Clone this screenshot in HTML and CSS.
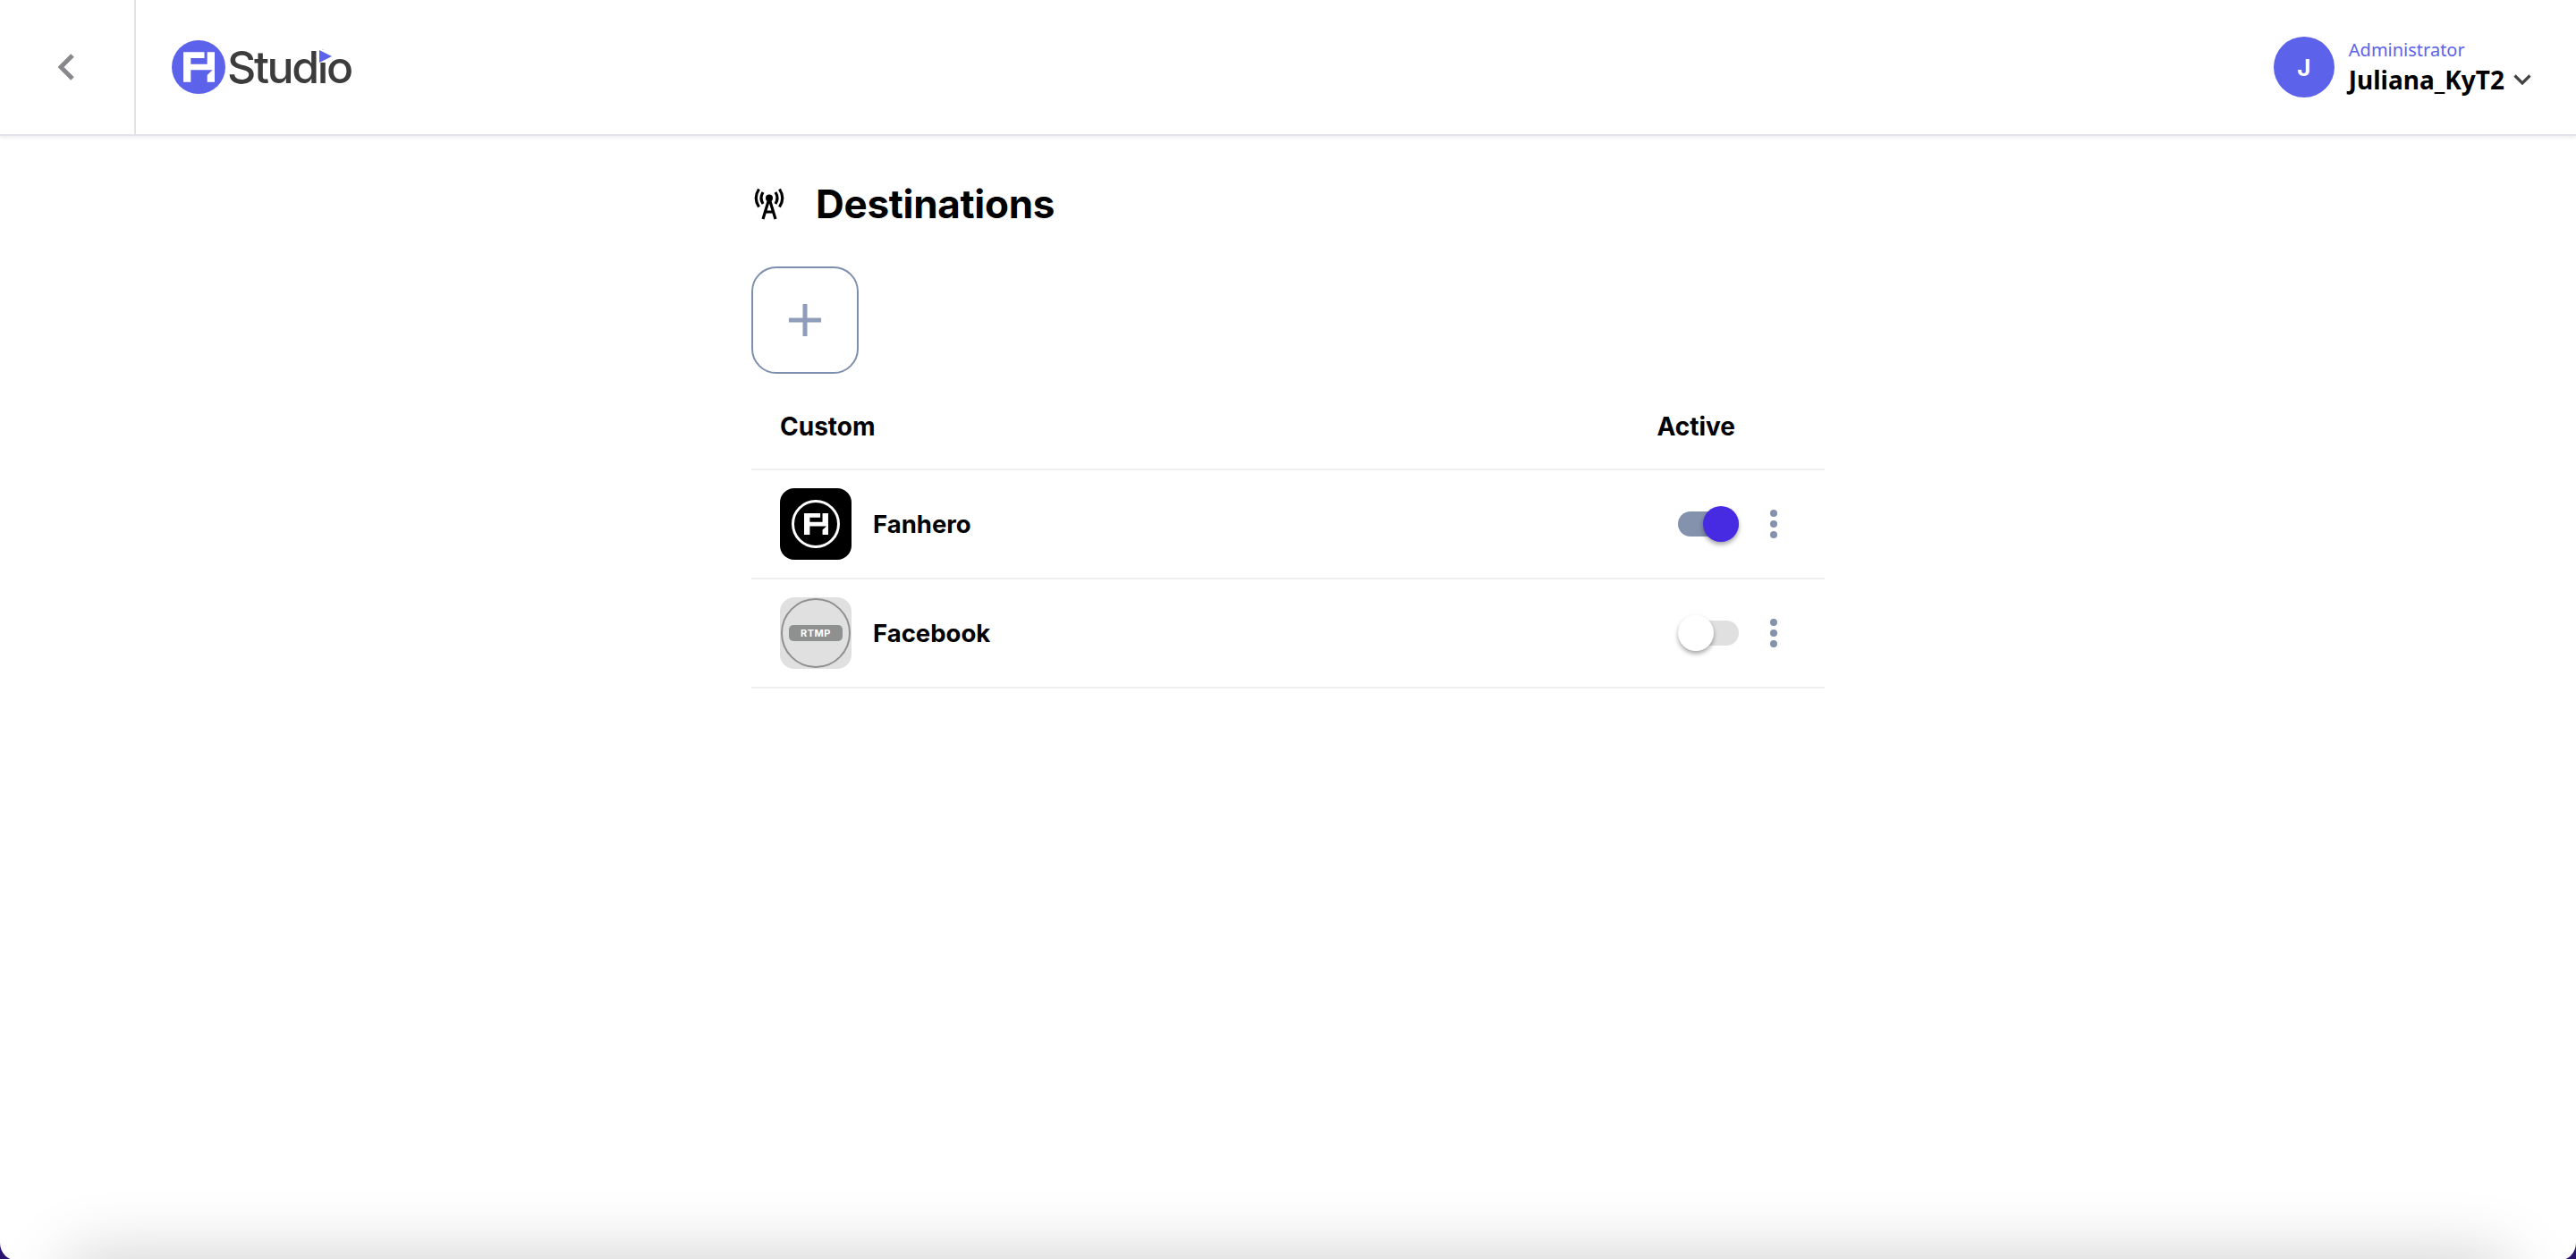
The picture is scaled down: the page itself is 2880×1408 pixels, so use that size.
FILE: index.html
```html
<!DOCTYPE html>
<html lang="en">
<head>
  <meta charset="UTF-8" />
  <title>Destinations</title>
  <link rel="stylesheet" href="styles.css">
</head>
<body>
  <div class="page">
    <header class="topbar">
      <a class="back-cell" href="#" aria-label="Back">
        <svg class="back-icon" viewBox="0 0 18 30" width="18" height="30"><path d="M16 2 L3 15 L16 28" fill="none" stroke="#87878c" stroke-width="5"/></svg>
      </a>
      <div class="brand">
        <svg class="brand-mark" viewBox="0 0 60 60" width="60" height="60">
          <circle cx="30" cy="30" r="30" fill="#5c62ea"/>
          <path d="M13 13.3 H36.5 V20 H21.3 V26.7 H39.7 V13.3 H48 V46.7 H39.7 V39 L45.5 33.3 H21.3 V46.7 H13 Z" fill="#fff"/>
        </svg>
        <span class="brand-name">Studio<svg class="brand-play" viewBox="0 0 14 14" width="14" height="14"><path d="M0 0 L14 7 L0 14 Z" fill="#5c62ea"/></svg></span>
      </div>
      <div class="user">
        <div class="avatar">J</div>
        <div class="user-info">
          <span class="user-role">Administrator</span>
          <span class="user-name">Juliana_KyT2
            <svg class="user-caret" viewBox="0 0 20 12" width="20" height="12"><path d="M1.5 1.5 L10 10 L18.5 1.5" fill="none" stroke="#444" stroke-width="3.2"/></svg>
          </span>
        </div>
      </div>
    </header>

    <main class="content">
      <div class="title-row">
        <svg class="title-icon" viewBox="0 0 36 36" width="36" height="36" fill="none" stroke="#000" stroke-width="3.2">
          <circle cx="18" cy="11.5" r="4" fill="#000" stroke="none"/>
          <path d="M18 12 L11 35 M18 12 L25 35 M13.5 27 H22.5"/>
          <path d="M11 5 Q7 11.5 11 18 M25 5 Q29 11.5 25 18"/>
          <path d="M6.5 1.5 Q0 11.5 6.5 21.5 M29.5 1.5 Q36 11.5 29.5 21.5"/>
        </svg>
        <h1>Destinations</h1>
      </div>

      <button class="add-btn" aria-label="Add destination">
        <svg viewBox="0 0 36 36" width="36" height="36"><path d="M18 0 V36 M0 18 H36" stroke="#8f9dba" stroke-width="5"/></svg>
      </button>

      <div class="table-head">
        <span>Custom</span>
        <span>Active</span>
      </div>

      <div class="dest-row">
        <svg class="dest-icon" viewBox="0 0 80 80" width="80" height="80">
          <rect width="80" height="80" rx="16" fill="#000"/>
          <circle cx="40" cy="40" r="25.5" fill="none" stroke="#fff" stroke-width="3"/>
          <path transform="translate(27 28) scale(.77 .72) translate(-13 -13.3)" d="M13 13.3 H36.5 V20 H21.3 V26.7 H39.7 V13.3 H48 V46.7 H39.7 V39 L45.5 33.3 H21.3 V46.7 H13 Z" fill="#fff"/>
        </svg>
        <span class="dest-name">Fanhero</span>
        <div class="toggle on"><span class="knob"></span></div>
        <button class="menu-btn" aria-label="Options"><i></i><i></i><i></i></button>
      </div>

      <div class="dest-row">
        <div class="rtmp-icon"><span class="rtmp-pill">RTMP</span></div>
        <span class="dest-name">Facebook</span>
        <div class="toggle"><span class="knob"></span></div>
        <button class="menu-btn" aria-label="Options"><i></i><i></i><i></i></button>
      </div>
    </main>

    <div class="bottom-shade"></div>
  </div>
</body>
</html>
```

FILE: styles.css
```css
:root {
  --brand: #5c62ea;
  --slate: #8492ad;
  --line: #f0f0f0;
}
html, body {
  margin: 0;
  height: 100%;
  overflow: hidden;
  background-color: #2a1470;
}
body {
  font-family: Inter, 'Noto Sans', sans-serif;
  color: #000;
}
.page {
  position: relative;
  height: 1410px;
  background-color: #fff;
  border-radius: 0 0 20px 20px;
  overflow: hidden;
}

/* top bar */
.topbar {
  display: flex;
  align-items: center;
  height: 150px;
  padding-right: 50px;
  border-bottom: 2px solid #e3e4e9;
  box-shadow: 0 2px 4px rgba(70,75,110,0.1);
}
.back-cell {
  display: flex;
  align-items: center;
  flex: none;
  width: 152px;
  height: 100%;
  padding-left: 65px;
  box-sizing: border-box;
  border-right: 2px solid #e3e3e6;
}
.brand {
  display: flex;
  align-items: center;
  flex: 1;
  margin-left: 40px;
}
.brand-name {
  position: relative;
  margin-left: 2px;
  font-size: 50px;
  font-weight: 500;
  letter-spacing: -2.4px;
  color: #3c3c3c;
  line-height: 60px;
}
.brand-play {
  position: absolute;
  right: 22px;
  top: 11px;
  background-color: #fff;
}
.user {
  display: flex;
  align-items: center;
  gap: 16px;
}
.avatar {
  display: flex;
  align-items: center;
  justify-content: center;
  width: 68px;
  height: 68px;
  border-radius: 50%;
  background-color: var(--brand);
  color: #fff;
  font-size: 26px;
  font-weight: 700;
}
.user-info {
  display: flex;
  flex-direction: column;
  font-family: 'Noto Sans', sans-serif;
}
.user-role {
  font-size: 20px;
  line-height: 28px;
  color: var(--brand);
}
.user-name {
  display: flex;
  align-items: center;
  gap: 10px;
  font-size: 28px;
  font-weight: 700;
  line-height: 38px;
}

/* main column */
.content {
  width: 1200px;
  margin: 0 auto;
}
.title-row {
  display: flex;
  align-items: center;
  height: 60px;
  margin-top: 46px;
  margin-bottom: 40px;
  padding-left: 2px;
}
h1 {
  margin: 0 0 0 34px;
  font-size: 44px;
  font-weight: 700;
  letter-spacing: -0.3px;
}
.add-btn {
  display: flex;
  align-items: center;
  justify-content: center;
  width: 120px;
  height: 120px;
  padding: 0;
  background: #fff;
  border: 2px solid #7f8fae;
  border-radius: 28px;
  cursor: pointer;
}
.table-head {
  display: flex;
  justify-content: space-between;
  align-items: center;
  height: 108px;
  padding: 12px 100px 0 32px;
  box-sizing: border-box;
  border-bottom: 2px solid var(--line);
  font-size: 28px;
  font-weight: 700;
}
.dest-row {
  display: flex;
  align-items: center;
  height: 122px;
  padding: 0 32px;
  box-sizing: border-box;
  border-bottom: 2px solid var(--line);
}
.dest-icon {
  flex: none;
}
.rtmp-icon {
  display: flex;
  align-items: center;
  justify-content: center;
  flex: none;
  position: relative;
  width: 80px;
  height: 80px;
  border-radius: 16px;
  background-color: #e0e0e0;
}
.rtmp-icon::before {
  content: "";
  position: absolute;
  inset: 1px;
  border: 2px solid #8f9090;
  border-radius: 50%;
}
.rtmp-pill {
  display: block;
  width: 60px;
  height: 18px;
  border-radius: 5px;
  background-color: #8f9090;
  color: #fff;
  font-size: 11px;
  font-weight: 700;
  letter-spacing: 0.5px;
  line-height: 18px;
  text-align: center;
}
.dest-name {
  flex: 1;
  margin-left: 24px;
  font-size: 27.5px;
  font-weight: 700;
}
.toggle {
  position: relative;
  width: 68px;
  height: 28px;
  border-radius: 14px;
  background-color: #e0e0e0;
}
.toggle.on {
  background-color: var(--slate);
}
.knob {
  position: absolute;
  left: 0;
  top: -6px;
  width: 40px;
  height: 40px;
  border-radius: 50%;
  background-color: #fff;
  box-shadow: 0 3px 5px rgba(0,0,0,0.35);
}
.toggle.on .knob {
  left: 28px;
  background-color: #472be3;
}
.menu-btn {
  display: flex;
  flex-direction: column;
  align-items: center;
  gap: 4px;
  width: 50px;
  margin-left: 14px;
  padding: 0;
  background: none;
  border: none;
  cursor: pointer;
}
.menu-btn i {
  width: 8px;
  height: 8px;
  border-radius: 50%;
  background-color: var(--slate);
}

/* the soft shadow of the panel sitting under the page */
.bottom-shade {
  position: absolute;
  left: 70px;
  right: 70px;
  top: 1408px;
  height: 60px;
  border-radius: 60px;
  box-shadow: 0 0 76px rgba(0,0,0,0.22);
}
```
